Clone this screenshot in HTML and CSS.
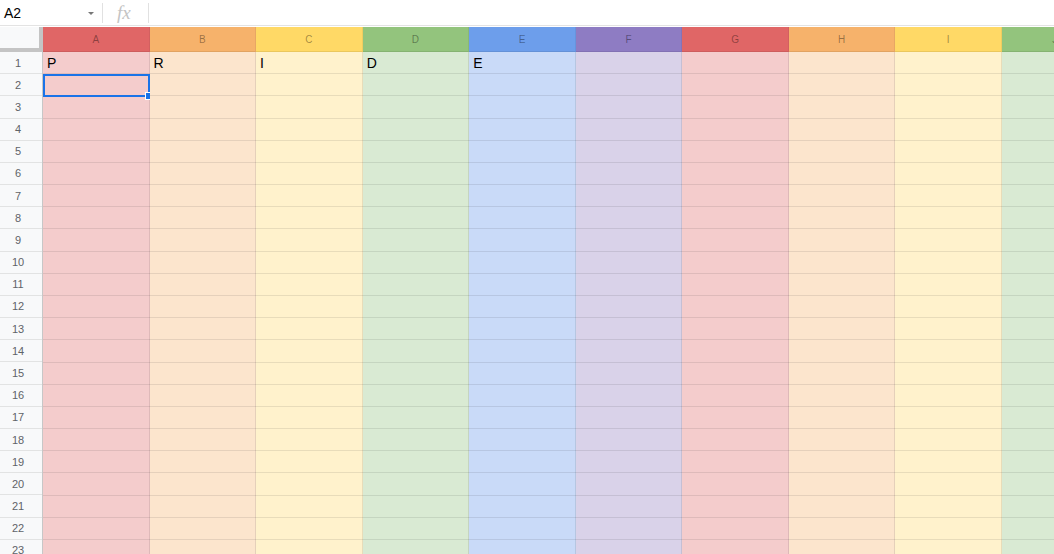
FILE: index.html
```html
<!DOCTYPE html>
<html>
<head>
<meta charset="utf-8">
<link rel="stylesheet" href="styles.css">
</head>
<body>
<div class="formula-bar">
  <div class="namebox"><span class="ref">A2</span><span class="caret"></span></div>
  <div class="sep"></div>
  <div class="fx">fx</div>
  <div class="sep"></div>
  <div class="input"></div>
</div>
<div class="sheet">
  <div class="rownums">
    <div class="corner"></div>
    <div class="rn">1</div><div class="rn">2</div><div class="rn">3</div><div class="rn">4</div>
    <div class="rn">5</div><div class="rn">6</div><div class="rn">7</div><div class="rn">8</div>
    <div class="rn">9</div><div class="rn">10</div><div class="rn">11</div><div class="rn">12</div>
    <div class="rn">13</div><div class="rn">14</div><div class="rn">15</div><div class="rn">16</div>
    <div class="rn">17</div><div class="rn">18</div><div class="rn">19</div><div class="rn">20</div>
    <div class="rn">21</div><div class="rn">22</div><div class="rn">23</div>
  </div>
  <div class="col red">
    <div class="head">A</div>
    <div class="body"><div class="cell">P</div><div class="selection"><span class="handle"></span></div></div>
  </div>
  <div class="col orange">
    <div class="head">B</div>
    <div class="body"><div class="cell">R</div></div>
  </div>
  <div class="col yellow">
    <div class="head">C</div>
    <div class="body"><div class="cell">I</div></div>
  </div>
  <div class="col green">
    <div class="head">D</div>
    <div class="body"><div class="cell">D</div></div>
  </div>
  <div class="col blue">
    <div class="head">E</div>
    <div class="body"><div class="cell">E</div></div>
  </div>
  <div class="col purple">
    <div class="head">F</div>
    <div class="body"><div class="cell"></div></div>
  </div>
  <div class="col red">
    <div class="head">G</div>
    <div class="body"><div class="cell"></div></div>
  </div>
  <div class="col orange">
    <div class="head">H</div>
    <div class="body"><div class="cell"></div></div>
  </div>
  <div class="col yellow">
    <div class="head">I</div>
    <div class="body"><div class="cell"></div></div>
  </div>
  <div class="col green">
    <div class="head">J</div>
    <div class="body"><div class="cell"></div></div>
  </div>
</div>
</body>
</html>
```
FILE: styles.css
```css
html, body {
  margin: 0;
  padding: 0;
  width: 1054px;
  height: 554px;
  overflow: hidden;
  background: #ffffff;
  font-family: "Liberation Sans", Arial, sans-serif;
}

.formula-bar {
  display: flex;
  align-items: center;
  height: 25px;
  border-bottom: 1px solid #e3e3e3;
  margin-bottom: 1px;
}

.namebox {
  width: 102px;
  display: flex;
  align-items: center;
  justify-content: space-between;
  box-sizing: border-box;
  padding: 0 8px 0 4px;
}

.ref {
  font-size: 14px;
  color: #000;
}

.caret {
  width: 0;
  height: 0;
  border-left: 3px solid transparent;
  border-right: 3px solid transparent;
  border-top: 3px solid #777;
  margin-top: 2px;
}

.sep {
  width: 1px;
  height: 20px;
  background: #e1e1e1;
}

.fx {
  width: 45px;
  box-sizing: border-box;
  padding-left: 14px;
  font-family: "Liberation Serif", "Times New Roman", serif;
  font-style: italic;
  font-size: 19px;
  color: #c4c4c4;
  line-height: 20px;
}

.input {
  flex: 1;
}

.sheet {
  display: flex;
  height: 530px;
  overflow: hidden;
}

.rownums {
  flex: 0 0 43px;
  background: #f8f9fa;
  border-right: 1px solid #c7c7c7;
  box-sizing: border-box;
}

.corner {
  height: 25px;
  box-sizing: border-box;
  border-right: 4px solid #c4c4c4;
  border-bottom: 4px solid #c4c4c4;
  background: #f8f9fa;
  margin-right: -1px;
}

.rn {
  height: 22.18px;
  box-sizing: border-box;
  border-bottom: 1px solid #e2e3e3;
  display: flex;
  align-items: center;
  justify-content: center;
  font-size: 11px;
  color: #5f6368;
  padding-right: 6px;
}

.col {
  flex: 0 0 106.55px;
  display: flex;
  flex-direction: column;
}

.head {
  height: 25px;
  box-sizing: border-box;
  display: flex;
  align-items: center;
  justify-content: center;
  font-size: 10px;
  color: rgba(0, 0, 0, 0.38);
  border-right: 1px solid rgba(0, 0, 0, 0.06);
  border-bottom: 1px solid rgba(0, 0, 0, 0.08);
}

.body {
  position: relative;
  flex: 1;
  border-right: 1px solid rgba(0, 0, 0, 0.09);
  background-image: repeating-linear-gradient(to bottom,
    transparent 0, transparent 21.18px,
    rgba(0, 0, 0, 0.09) 21.18px, rgba(0, 0, 0, 0.09) 22.18px);
}

.cell {
  height: 22.18px;
  box-sizing: border-box;
  padding: 3px 0 0 4px;
  font-size: 14px;
  line-height: 16px;
  color: #000;
}

.red .head { background-color: #e06666; }
.red .body { background-color: #f4cccc; }
.orange .head { background-color: #f6b26b; }
.orange .body { background-color: #fce5cd; }
.yellow .head { background-color: #ffd966; }
.yellow .body { background-color: #fff2cc; }
.green .head { background-color: #93c47d; }
.green .body { background-color: #d9ead3; }
.blue .head { background-color: #6d9eeb; }
.blue .body { background-color: #c9daf8; }
.purple .head { background-color: #8e7cc3; }
.purple .body { background-color: #d9d2e9; }

.selection {
  position: absolute;
  left: 0;
  top: 21.5px;
  width: 107px;
  height: 23px;
  box-sizing: border-box;
  border: 2px solid #1a73e8;
}

.handle {
  position: absolute;
  right: -5px;
  bottom: -5px;
  width: 6px;
  height: 6px;
  background: #1a73e8;
  border: 1px solid #ffffff;
}
```
